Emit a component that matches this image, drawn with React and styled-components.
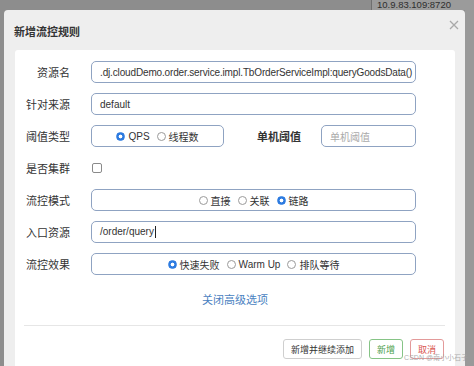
import styled, { createGlobalStyle } from "styled-components";

const GlobalStyle = createGlobalStyle`
  html, body {
    margin: 0;
    padding: 0;
    background: #8d8d8d;
  }
  body {
    font-family: "Liberation Sans", "Noto Sans CJK SC", sans-serif;
  }
`;

const Page = styled.div({
  position: "relative",
  width: "474px",
  height: "366px",
  overflow: "hidden",
  background: "#8d8d8d",
  paddingTop: "10px",
  boxSizing: "border-box",
});

const BackCell = styled.div({
  position: "absolute",
  top: "0",
  left: "371px",
  width: "103px",
  height: "10px",
  borderLeft: "1px solid #6f6f6f",
  background: "#9b9b9b",
  color: "#2e2e2e",
  fontSize: "9.5px",
  lineHeight: "9px",
  paddingLeft: "5px",
  boxSizing: "border-box",
});

const BackStrip = styled.div({
  position: "absolute",
  top: "10px",
  right: "0",
  width: "9px",
  height: "356px",
  background: "#999",
});

const Modal = styled.div({
  marginLeft: "4px",
  width: "461px",
  height: "370px",
  background: "#eeeeee",
  borderRadius: "4px 4px 0 0",
  display: "flex",
  flexDirection: "column",
});

const Header = styled.div({
  height: "40px",
  display: "flex",
  alignItems: "center",
  justifyContent: "space-between",
  padding: "0 6px 0 10px",
});

const Title = styled.div({
  fontSize: "11px",
  fontWeight: "600",
  color: "#333",
  marginTop: "1px",
});

const Close = styled.button({
  border: "none",
  background: "transparent",
  padding: "0",
  width: "10px",
  height: "10px",
  alignSelf: "flex-start",
  marginTop: "8px",
  cursor: "pointer",
});

const Panel = styled.div({
  flex: "1",
  margin: "0 10px 0 11px",
  background: "#fff",
  borderRadius: "3px",
  paddingTop: "11px",
});

const Form = styled.div({
  display: "flex",
  flexDirection: "column",
  gap: "10px",
  paddingRight: "39px",
});

const Row = styled.div({
  display: "flex",
  alignItems: "center",
  height: "22px",
});

const Label = styled.div`
  width: ${(p) => p.$w || 55}px;
  margin-right: ${(p) => (p.$gap != null ? p.$gap : 21)}px;
  text-align: right;
  font-size: 11px;
  color: #333;
  font-weight: ${(p) => (p.$bold ? 600 : 400)};
  flex-shrink: 0;
`;

const Field = styled.div`
  box-sizing: border-box;
  height: 22px;
  width: ${(p) => (p.$w ? p.$w + "px" : "auto")};
  flex: ${(p) => (p.$w ? "none" : "1")};
  border: 1px solid #8fa3c2;
  border-radius: 5px;
  padding: 0 8px;
  display: flex;
  align-items: center;
  justify-content: ${(p) => (p.$center ? "center" : "flex-start")};
  gap: 7px;
  font-size: 10px;
  letter-spacing: ${(p) => (p.$tight ? "-0.15px" : "0")};
  color: ${(p) => (p.$placeholder ? "#aaa" : "#333")};
  white-space: nowrap;
  overflow: hidden;
`;

const Caret = styled.span({
  display: "inline-block",
  width: "1px",
  height: "12px",
  background: "#222",
  marginLeft: "1px",
  verticalAlign: "middle",
});

const Option = styled.label({
  display: "flex",
  alignItems: "center",
  gap: "3px",
  fontSize: "10px",
  color: "#333",
});

const Dot = styled.span`
  box-sizing: border-box;
  width: 9px;
  height: 9px;
  border-radius: 50%;
  border: 1px solid ${(p) => (p.$on ? "#2d7be0" : "#9a9a9a")};
  background: ${(p) =>
    p.$on ? "radial-gradient(circle, #fff 0 1.6px, #2d7be0 2.2px)" : "#fff"};
`;

const Check = styled.span({
  boxSizing: "border-box",
  width: "10px",
  height: "10px",
  border: "1px solid #8a8a8a",
  borderRadius: "2px",
  marginLeft: "1px",
  background: "#fff",
});

const Toggle = styled.div({
  marginTop: "18px",
  textAlign: "center",
  fontSize: "11px",
  lineHeight: "14px",
  color: "#4a7fc1",
});

const Divider = styled.div({
  margin: "18px 10px 0 9px",
  height: "1px",
  background: "#e6e6e6",
});

const Footer = styled.div({
  display: "flex",
  justifyContent: "flex-end",
  gap: "7px",
  padding: "13px 11px 0 0",
});

const Button = styled.button`
  box-sizing: border-box;
  height: 20px;
  min-width: 34px;
  padding: 0 7px;
  border-radius: 3px;
  background: #fff;
  font-family: inherit;
  font-size: 9px;
  border: 1px solid ${(p) =>
    p.$kind === "ok" ? "#86c486" : p.$kind === "cancel" ? "#e39a9a" : "#cfcfcf"};
  color: ${(p) =>
    p.$kind === "ok" ? "#4a9e4a" : p.$kind === "cancel" ? "#d9534f" : "#333"};
`;

const Watermark = styled.div({
  position: "absolute",
  right: "6px",
  bottom: "4px",
  fontSize: "7px",
  color: "rgba(160,160,160,0.85)",
});

function Radio({ on, children }) {
  return (
    <Option>
      <Dot $on={on} />
      {children}
    </Option>
  );
}

export default function App() {
  return (
    <>
      <GlobalStyle />
      <Page>
        <BackCell>10.9.83.109:8720</BackCell>
        <BackStrip />
        <Modal>
          <Header>
            <Title>新增流控规则</Title>
            <Close aria-label="close">
              <svg width="10" height="10" viewBox="0 0 10 10">
                <path d="M1 1L9 9M9 1L1 9" stroke="#a9a9a9" strokeWidth="1.3" />
              </svg>
            </Close>
          </Header>
          <Panel>
            <Form>
              <Row>
                <Label>资源名</Label>
                <Field $tight>.dj.cloudDemo.order.service.impl.TbOrderServiceImpl:queryGoodsData()</Field>
              </Row>
              <Row>
                <Label>针对来源</Label>
                <Field>default</Field>
              </Row>
              <Row>
                <Label>阈值类型</Label>
                <Field $w={133} $center>
                  <Radio on>QPS</Radio>
                  <Radio>线程数</Radio>
                </Field>
                <Label $w={77} $gap={20} $bold>单机阈值</Label>
                <Field $w={95} $placeholder>单机阈值</Field>
              </Row>
              <Row>
                <Label>是否集群</Label>
                <Check />
              </Row>
              <Row>
                <Label>流控模式</Label>
                <Field $center>
                  <Radio>直接</Radio>
                  <Radio>关联</Radio>
                  <Radio on>链路</Radio>
                </Field>
              </Row>
              <Row>
                <Label>入口资源</Label>
                <Field>
                  <span>
                    /order/query
                    <Caret />
                  </span>
                </Field>
              </Row>
              <Row>
                <Label>流控效果</Label>
                <Field $center>
                  <Radio on>快速失败</Radio>
                  <Radio>Warm Up</Radio>
                  <Radio>排队等待</Radio>
                </Field>
              </Row>
            </Form>
            <Toggle>关闭高级选项</Toggle>
            <Divider />
            <Footer>
              <Button>新增并继续添加</Button>
              <Button $kind="ok">新增</Button>
              <Button $kind="cancel">取消</Button>
            </Footer>
          </Panel>
        </Modal>
        <Watermark>CSDN @南小小石子</Watermark>
      </Page>
    </>
  );
}
